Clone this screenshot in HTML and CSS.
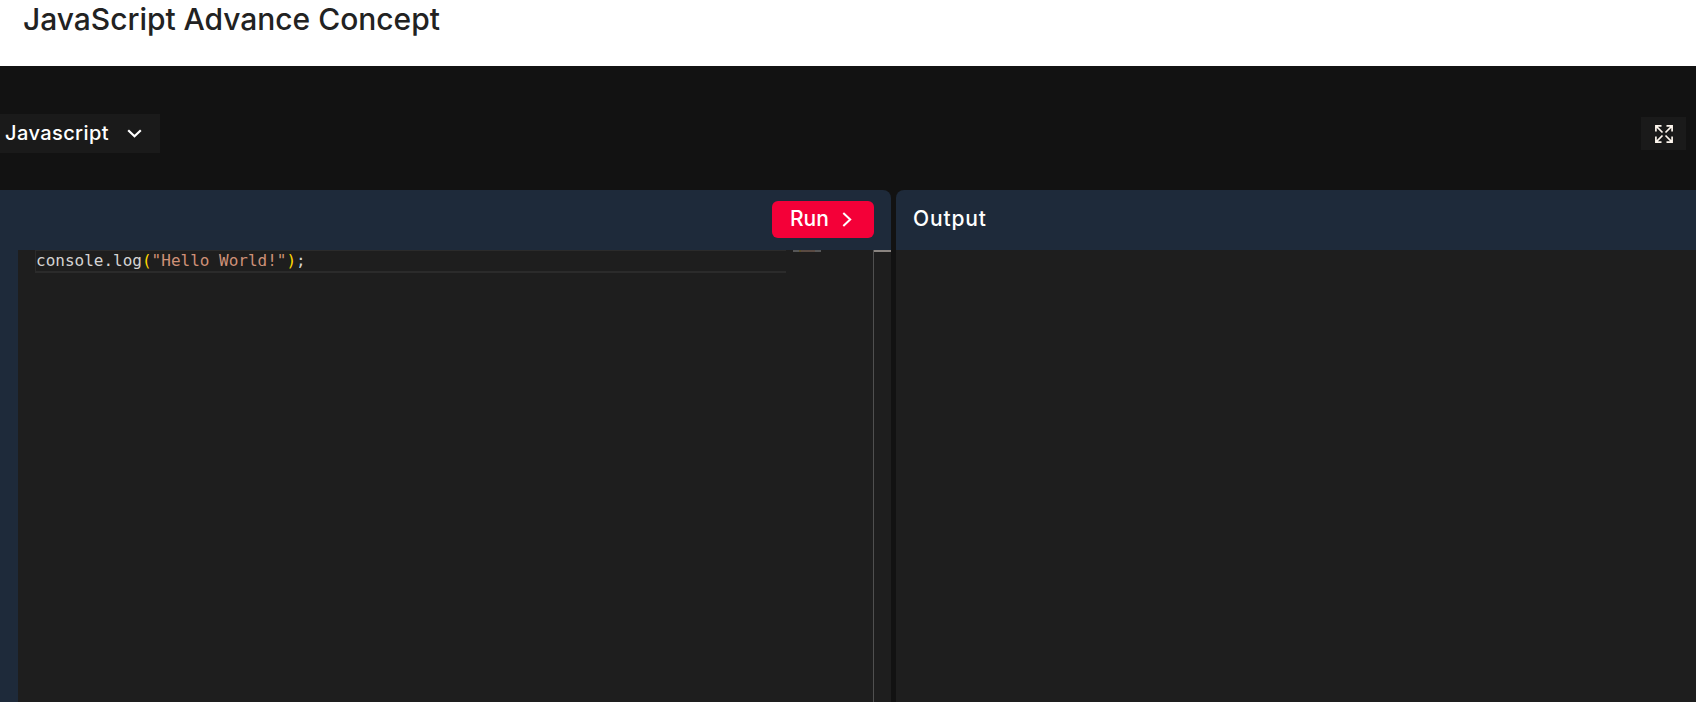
FILE: index.html
```html
<!DOCTYPE html>
<html lang="en">
<head>
<meta charset="utf-8">
<title>JavaScript Advance Concept</title>
<link rel="stylesheet" href="styles.css">
</head>
<body>
<header class="page-head">
  <h1 class="page-title">JavaScript Advance Concept</h1>
</header>
<main class="ide">
  <div class="toolbar">
    <button class="lang-select">
      <span>Javascript</span>
      <svg class="chev" width="15" height="9" viewBox="0 0 15 9"><path d="M1.200 1.200 7.500 7.300l6.300-6.100" fill="none" stroke="#fff" stroke-width="2.200"/></svg>
    </button>
    <button class="expand">
      <svg width="18" height="18" viewBox="0 0 18 18" fill="none" stroke="#fdf6ee" stroke-width="1.700">
        <path d="M.9 6.500V.9h5.600M.9.900l6.600 6.600M11.500.9h5.600v5.600M17.100.9l-6.600 6.600M.9 11.500v5.600h5.600M.9 17.100l6.600-6.600M11.500 17.100h5.600v-5.600M17.100 17.100l-6.600-6.600"/>
      </svg>
    </button>
  </div>
  <div class="panes">
    <section class="pane pane-code">
      <div class="pane-head pane-head-code">
        <button class="run"><span>Run</span>
          <svg class="run-chev" width="10" height="15" viewBox="0 0 10 15"><path d="M1.300 1 8.200 7.500l-6.900 6.500" fill="none" stroke="#fff" stroke-width="2"/></svg>
        </button>
      </div>
      <div class="editor-wrap">
        <div class="editor">
          <div class="lines">
            <div class="line"><span class="c-pl">console.log</span><span class="c-br">(</span><span class="c-str">"Hello World!"</span><span class="c-br">)</span><span class="c-pl">;</span></div>
          </div>
          <div class="minimap"><i class="mini a"></i><i class="mini b"></i><i class="mini c"></i><i class="mini a"></i></div>
          <div class="scroll"><div class="scroll-top"></div></div>
        </div>
      </div>
    </section>
    <section class="pane pane-out">
      <div class="pane-head"><h2 class="out-title">Output</h2></div>
      <div class="out-body"></div>
    </section>
  </div>
</main>
</body>
</html>
```
FILE: styles.css
```css
* { box-sizing: border-box; }
html, body { margin: 0; height: 100%; overflow: hidden; }
body { background: #121212; font-family: "Inter", "Lato", sans-serif; display: flex; flex-direction: column; height: 702px; }
button { border: 0; font: inherit; color: #fff; padding: 0; cursor: pointer; }

.page-head { background: #fff; height: 66px; flex: none; padding-left: 23px; }
.page-title { margin: 0; font-size: 30px; line-height: 39px; font-weight: 500; color: #222; letter-spacing: -0.03px; white-space: nowrap; }

.ide { flex: 1; display: flex; flex-direction: column; min-height: 0; background: #121212; }
.toolbar { height: 124px; flex: none; display: flex; justify-content: space-between; align-items: flex-start; padding: 48px 10px 0 0; }
.lang-select { width: 160px; height: 39px; background: #1a1a1a; display: flex; align-items: center; gap: 18px; padding: 0 0 1px 5px; font-size: 20px; font-weight: 500; letter-spacing: 0.42px; }
.chev { display: block; }
.expand { width: 45px; height: 33px; margin-top: 3px; background: #1a1a1a; display: flex; align-items: center; justify-content: center; }

.panes { flex: 1; display: flex; gap: 5px; min-height: 0; }
.pane { display: flex; flex-direction: column; min-height: 0; }
.pane-code { width: 891px; background: #1e2a3a; border-top-right-radius: 8px; }
.pane-out { flex: 1; }
.pane-head { height: 60px; flex: none; background: #1e2a3a; display: flex; align-items: center; }
.pane-head-code { justify-content: flex-end; padding: 0 17px 1px 0; background: none; }
.pane-out .pane-head { border-top-left-radius: 8px; padding: 0 0 3px 17px; }
.run { width: 102px; height: 37px; background: #f40038; border-radius: 6px; font-size: 21px; font-weight: 500; display: flex; align-items: center; gap: 13px; padding: 0 0 2px 18px; }
.run-chev { display: block; margin-top: 2px; }
.out-title { margin: 0; font-size: 21px; line-height: 24px; font-weight: 500; color: #fff; letter-spacing: 0.85px; }

.editor-wrap { flex: 1; padding-left: 18px; min-height: 0; }
.editor { height: 100%; background: #1e1e1e; display: flex; }
.lines { width: 768px; padding-left: 17px; }
.line { height: 23px; border: 1px solid #2b2b2b; border-width: 1px 0 2px 1px; font-family: "DejaVu Sans Mono", "Liberation Mono", monospace; font-size: 16px; line-height: 20px; white-space: pre; }
.c-br { color: #ffd700; }
.c-str { color: #ce9178; }
.c-pl { color: #d4d4d4; }
.minimap { width: 87px; flex: none; display: flex; align-items: flex-start; padding-left: 7px; }
.mini { display: block; height: 2px; }
.mini.a { width: 6px; background: #565656; }
.mini.b { width: 2px; background: #5a4f2a; }
.mini.c { width: 14px; background: #5a4a42; }
.scroll { width: 18px; flex: none; border-left: 1px solid #505050; }
.scroll-top { height: 2px; background: #8a8480; }
.out-body { flex: 1; background: #1e1e1e; }
```
